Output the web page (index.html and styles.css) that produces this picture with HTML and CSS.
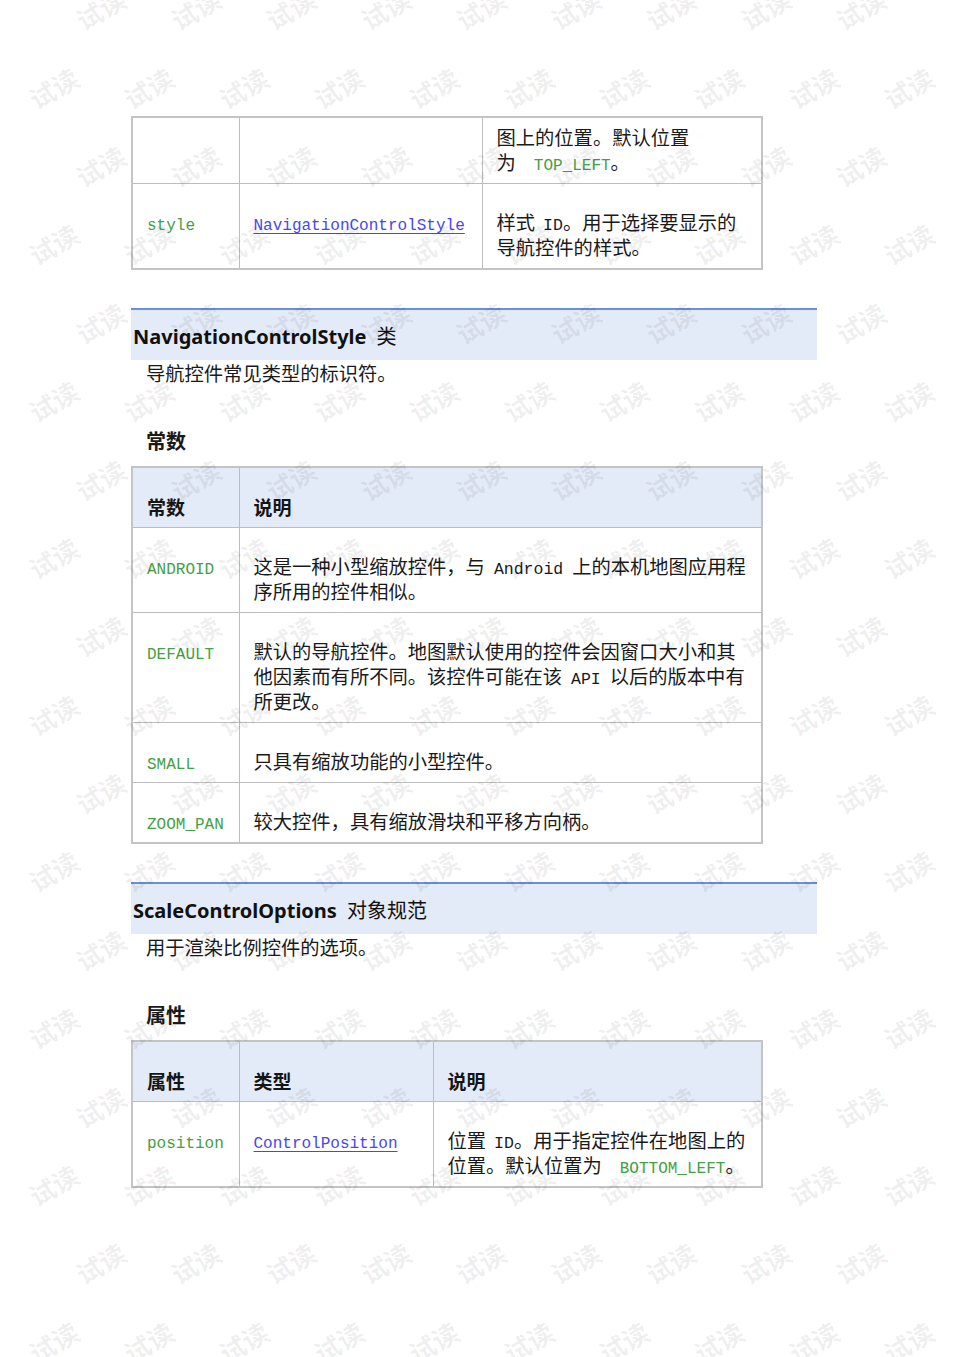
FILE: index.html
```html
<!DOCTYPE html>
<html lang="zh-CN">
<head>
<meta charset="utf-8">
<title>NavigationControlStyle</title>
<link rel="stylesheet" href="styles.css">
</head>
<body>
<div class="page">
  <table class="tbl">
    <colgroup><col class="c1"><col class="c2a"><col class="c3a"></colgroup>
    <tr class="cont">
      <td></td>
      <td></td>
      <td>图上的位置。默认位置<br>为<span class="code gap">TOP_LEFT</span>。</td>
    </tr>
    <tr>
      <td><span class="code">style</span></td>
      <td><span class="link">NavigationControlStyle</span></td>
      <td>样式<span class="lat l">ID</span>。用于选择要显示的<br>导航控件的样式。</td>
    </tr>
  </table>

  <div class="section">
    <div class="band"><span class="en">NavigationControlStyle</span><span class="zh">类</span></div>
    <p class="desc">导航控件常见类型的标识符。</p>
    <h3 class="sub">常数</h3>
    <table class="tbl">
      <colgroup><col class="c1"><col class="c2b"></colgroup>
      <tr><th>常数</th><th>说明</th></tr>
      <tr>
        <td><span class="code">ANDROID</span></td>
        <td>这是一种小型缩放控件，与<span class="lat">Android</span>上的本机地图应用程<br>序所用的控件相似。</td>
      </tr>
      <tr>
        <td><span class="code">DEFAULT</span></td>
        <td>默认的导航控件。地图默认使用的控件会因窗口大小和其<br>他因素而有所不同。该控件可能在该<span class="lat">API</span>以后的版本中有<br>所更改。</td>
      </tr>
      <tr>
        <td><span class="code">SMALL</span></td>
        <td>只具有缩放功能的小型控件。</td>
      </tr>
      <tr>
        <td><span class="code">ZOOM_PAN</span></td>
        <td>较大控件，具有缩放滑块和平移方向柄。</td>
      </tr>
    </table>
  </div>

  <div class="section">
    <div class="band"><span class="en">ScaleControlOptions</span><span class="zh">对象规范</span></div>
    <p class="desc">用于渲染比例控件的选项。</p>
    <h3 class="sub">属性</h3>
    <table class="tbl">
      <colgroup><col class="c1"><col class="c2c"><col class="c3c"></colgroup>
      <tr><th>属性</th><th>类型</th><th>说明</th></tr>
      <tr>
        <td><span class="code">position</span></td>
        <td><span class="link">ControlPosition</span></td>
        <td>位置<span class="lat l">ID</span>。用于指定控件在地图上的<br>位置。默认位置为<span class="code gap">BOTTOM_LEFT</span>。</td>
      </tr>
    </table>
  </div>
</div>

<div class="wm" aria-hidden="true">
  <div class="wm-grid">
    <div class="wm-row"><span>试读</span><span>试读</span><span>试读</span><span>试读</span><span>试读</span><span>试读</span><span>试读</span><span>试读</span><span>试读</span></div>
    <div class="wm-row odd"><span>试读</span><span>试读</span><span>试读</span><span>试读</span><span>试读</span><span>试读</span><span>试读</span><span>试读</span><span>试读</span><span>试读</span></div>
    <div class="wm-row"><span>试读</span><span>试读</span><span>试读</span><span>试读</span><span>试读</span><span>试读</span><span>试读</span><span>试读</span><span>试读</span></div>
    <div class="wm-row odd"><span>试读</span><span>试读</span><span>试读</span><span>试读</span><span>试读</span><span>试读</span><span>试读</span><span>试读</span><span>试读</span><span>试读</span></div>
    <div class="wm-row"><span>试读</span><span>试读</span><span>试读</span><span>试读</span><span>试读</span><span>试读</span><span>试读</span><span>试读</span><span>试读</span></div>
    <div class="wm-row odd"><span>试读</span><span>试读</span><span>试读</span><span>试读</span><span>试读</span><span>试读</span><span>试读</span><span>试读</span><span>试读</span><span>试读</span></div>
    <div class="wm-row"><span>试读</span><span>试读</span><span>试读</span><span>试读</span><span>试读</span><span>试读</span><span>试读</span><span>试读</span><span>试读</span></div>
    <div class="wm-row odd"><span>试读</span><span>试读</span><span>试读</span><span>试读</span><span>试读</span><span>试读</span><span>试读</span><span>试读</span><span>试读</span><span>试读</span></div>
    <div class="wm-row"><span>试读</span><span>试读</span><span>试读</span><span>试读</span><span>试读</span><span>试读</span><span>试读</span><span>试读</span><span>试读</span></div>
    <div class="wm-row odd"><span>试读</span><span>试读</span><span>试读</span><span>试读</span><span>试读</span><span>试读</span><span>试读</span><span>试读</span><span>试读</span><span>试读</span></div>
    <div class="wm-row"><span>试读</span><span>试读</span><span>试读</span><span>试读</span><span>试读</span><span>试读</span><span>试读</span><span>试读</span><span>试读</span></div>
    <div class="wm-row odd"><span>试读</span><span>试读</span><span>试读</span><span>试读</span><span>试读</span><span>试读</span><span>试读</span><span>试读</span><span>试读</span><span>试读</span></div>
    <div class="wm-row"><span>试读</span><span>试读</span><span>试读</span><span>试读</span><span>试读</span><span>试读</span><span>试读</span><span>试读</span><span>试读</span></div>
    <div class="wm-row odd"><span>试读</span><span>试读</span><span>试读</span><span>试读</span><span>试读</span><span>试读</span><span>试读</span><span>试读</span><span>试读</span><span>试读</span></div>
    <div class="wm-row"><span>试读</span><span>试读</span><span>试读</span><span>试读</span><span>试读</span><span>试读</span><span>试读</span><span>试读</span><span>试读</span></div>
    <div class="wm-row odd"><span>试读</span><span>试读</span><span>试读</span><span>试读</span><span>试读</span><span>试读</span><span>试读</span><span>试读</span><span>试读</span><span>试读</span></div>
    <div class="wm-row"><span>试读</span><span>试读</span><span>试读</span><span>试读</span><span>试读</span><span>试读</span><span>试读</span><span>试读</span><span>试读</span></div>
    <div class="wm-row odd"><span>试读</span><span>试读</span><span>试读</span><span>试读</span><span>试读</span><span>试读</span><span>试读</span><span>试读</span><span>试读</span><span>试读</span></div>
  </div>
</div>
</body>
</html>
```

FILE: styles.css
```css
* { box-sizing: border-box; }
html, body { margin: 0; padding: 0; background: #ffffff; }
body {
  font-family: "Noto Sans CJK SC", "Noto Sans", sans-serif;
  color: #1a1a1a;
  width: 960px;
  height: 1357px;
  position: relative;
  overflow: hidden;
}
.page { padding: 116px 0 0 131px; }

.tbl {
  border-collapse: collapse;
  border: 2px solid #c4c4c4;
  table-layout: fixed;
  width: 630px;
}
.c1 { width: 107px; }
.c2a { width: 243px; }
.c3a { width: 280px; }
.c2b { width: 523px; }
.c2c { width: 194px; }
.c3c { width: 329px; }

.tbl td, .tbl th {
  border: 1px solid #bdbdbd;
  padding: 26px 6px 8px 14px;
  height: 25px;
  line-height: 25px;
  vertical-align: top;
  text-align: left;
  font-size: 19.3px;
  font-weight: 400;
  white-space: nowrap;
}
.tbl th {
  background: #e4ebf8;
  font-weight: 700;
  font-size: 19px;
  color: #151515;
}
.tbl .cont td { padding-top: 7px; }

.code {
  font-family: "Liberation Mono", monospace;
  font-size: 16px;
  line-height: 1;
  color: #43a043;
}
.gap { margin-left: 18px; }
.link {
  font-family: "Liberation Mono", monospace;
  font-size: 16px;
  line-height: 1;
  color: #4747ec;
  text-decoration: underline;
  text-underline-offset: 3px;
}
.lat {
  font-family: "Liberation Mono", monospace;
  font-size: 16.5px;
  line-height: 1;
  margin: 0 9px;
  color: #1a1a1a;
}
.lat.l { margin: 0 0 0 8px; }

.section { margin-top: 38px; width: 686px; }
.band {
  border-top: 2px solid #6b8fd9;
  background: #e4ebf8;
  height: 52px;
  padding: 3px 0 0 2px;
  line-height: 46px;
  font-size: 20px;
  color: #111111;
}
.band .en { font-family: "Noto Sans", sans-serif; font-weight: 700; line-height: 1; }
.band .zh { margin-left: 10px; line-height: 1; }
.desc {
  margin: 0;
  padding-left: 15px;
  line-height: 26px;
  font-size: 19.3px;
}
.sub {
  margin: 40px 0 10px;
  padding-left: 15px;
  font-size: 20px;
  line-height: 30px;
  font-weight: 700;
}

.wm {
  position: absolute;
  left: 0;
  top: 0;
  width: 960px;
  height: 1357px;
  overflow: hidden;
  pointer-events: none;
}
.wm-grid { margin-top: -30px; }
.wm-row {
  display: flex;
  height: 78.4px;
  align-items: center;
  padding-left: 52.5px;
}
.wm-row.odd { padding-left: 5.5px; }
.wm-row span {
  flex: 0 0 95px;
  text-align: center;
  font-family: "Noto Sans CJK SC", sans-serif;
  font-weight: 700;
  font-size: 26px;
  line-height: 1;
  color: rgba(0, 0, 0, 0.07);
  transform: rotate(-30deg);
}
```
